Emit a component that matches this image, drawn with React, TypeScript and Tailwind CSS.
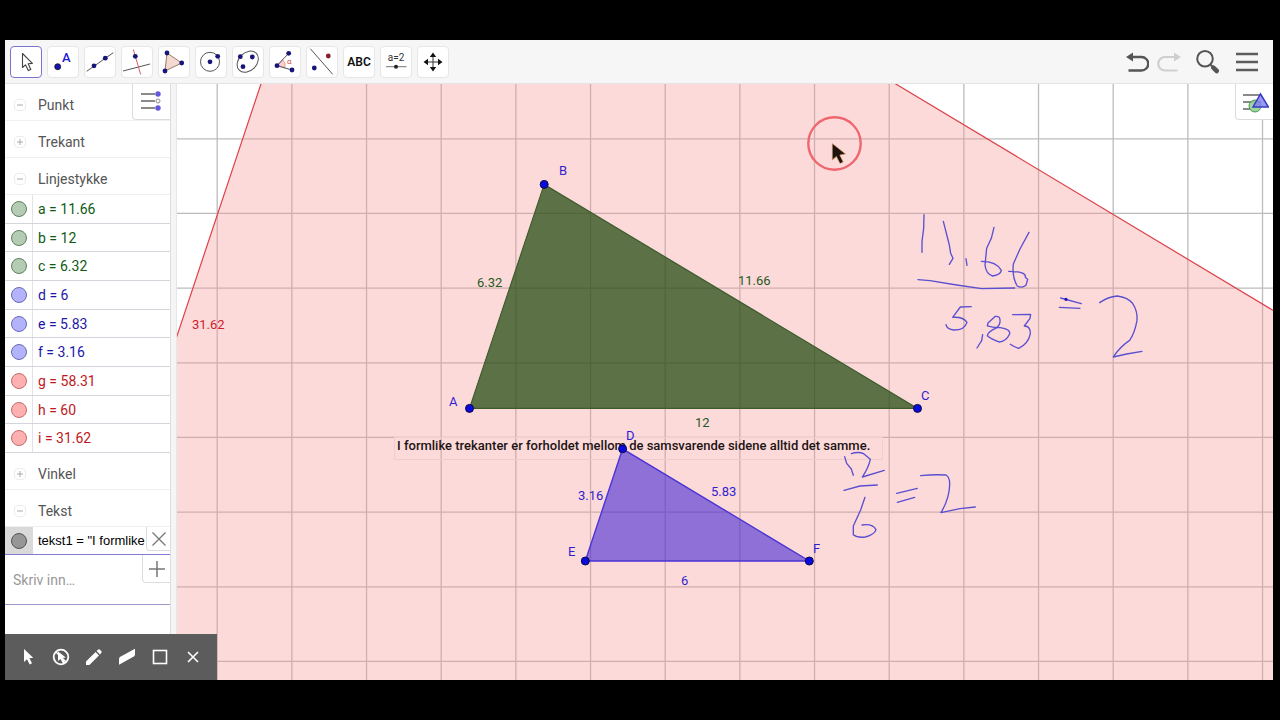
import React from 'react';

const UNIT = 112 / 3;

// The graphics view: where world axes land on the drawing surface
const gridX = Array.from({ length: 40 }, (_, i) => 40.2 + i * UNIT * 2);
const gridY = Array.from({ length: 20 }, (_, i) => 54.8 + i * UNIT * 2);

const segments = [
  { name: 'a', value: '11.66', text: 'text-[#0f5a14]', marble: 'bg-[#b3ccb3] border-[#5f7f5f]' },
  { name: 'b', value: '12', text: 'text-[#0f5a14]', marble: 'bg-[#b3ccb3] border-[#5f7f5f]' },
  { name: 'c', value: '6.32', text: 'text-[#0f5a14]', marble: 'bg-[#b3ccb3] border-[#5f7f5f]' },
  { name: 'd', value: '6', text: 'text-[#1c17a8]', marble: 'bg-[#b3b3fb] border-[#6a6ab8]' },
  { name: 'e', value: '5.83', text: 'text-[#1c17a8]', marble: 'bg-[#b3b3fb] border-[#6a6ab8]' },
  { name: 'f', value: '3.16', text: 'text-[#1c17a8]', marble: 'bg-[#b3b3fb] border-[#6a6ab8]' },
  { name: 'g', value: '58.31', text: 'text-[#c01822]', marble: 'bg-[#ffb0b0] border-[#c26a6a]' },
  { name: 'h', value: '60', text: 'text-[#c01822]', marble: 'bg-[#ffb0b0] border-[#c26a6a]' },
  { name: 'i', value: '31.62', text: 'text-[#c01822]', marble: 'bg-[#ffb0b0] border-[#c26a6a]' },
];

const points = [
  { name: 'A', x: 292.5, y: 324.4, lx: 272, ly: 322 },
  { name: 'B', x: 367.2, y: 100.4, lx: 382, ly: 91 },
  { name: 'C', x: 740.5, y: 324.4, lx: 744, ly: 316 },
  { name: 'D', x: 445.6, y: 364.8, lx: 449, ly: 356 },
  { name: 'E', x: 408.3, y: 477, lx: 391, ly: 472 },
  { name: 'F', x: 632.3, y: 477, lx: 636, ly: 469 },
];

const lengths = [
  { text: '6.32', x: 300, y: 203, fill: '#1f5a1f' },
  { text: '11.66', x: 561, y: 201, fill: '#1f5a1f' },
  { text: '12', x: 518, y: 343, fill: '#1f5a1f' },
  { text: '3.16', x: 401, y: 416, fill: '#2f1fd0' },
  { text: '5.83', x: 534, y: 412, fill: '#2f1fd0' },
  { text: '6', x: 504, y: 501, fill: '#2f1fd0' },
  { text: '31.62', x: 15, y: 245, fill: '#d01c2c' },
];

const Dot = ({ x, y, fill = '#16167a' }: { x: number; y: number; fill?: string }) => (
  <circle cx={x} cy={y} r="2.4" fill={fill} />
);

const tools = [
  {
    label: 'Flytt',
    icon: (
      <path
        d="M12.5 7.5V21.5L15.5 18.8L18.3 24.6L20.8 23.4L18.2 17.8L22.4 17.4Z"
        fill="white"
        stroke="#444"
        strokeWidth="1.1"
        strokeLinejoin="round"
      />
    ),
  },
  {
    label: 'Punkt',
    icon: (
      <>
        <circle cx="10.7" cy="20.7" r="3" fill="#1515b5" stroke="#111" strokeWidth="0.8" />
        <text x="15" y="16" fontSize="13" fontWeight="500" fill="#1b1bd6">A</text>
      </>
    ),
  },
  {
    label: 'Linje',
    icon: (
      <>
        <path d="M2.7 25.3L29.3 6.7" stroke="#555" />
        <Dot x={10} y={19.8} />
        <Dot x={21.3} y={12.2} />
      </>
    ),
  },
  {
    label: 'Normal linje',
    icon: (
      <>
        <path d="M2 25L29 18" stroke="#555" />
        <path d="M12.3 3.5L19.7 28.5" stroke="#d4606e" />
        <Dot x={14.3} y={10.3} />
      </>
    ),
  },
  {
    label: 'Mangekant',
    icon: (
      <>
        <path d="M9 7L23.7 17L7 25Z" fill="#f3d9cf" stroke="#9a7a6c" />
        <Dot x={9} y={7} />
        <Dot x={23.7} y={17} />
        <Dot x={7} y={25} />
      </>
    ),
  },
  {
    label: 'Sirkel',
    icon: (
      <>
        <circle cx="15" cy="15.8" r="9.5" stroke="#555" />
        <Dot x={15} y={15.8} />
        <Dot x={22.7} y={10.3} />
      </>
    ),
  },
  {
    label: 'Ellipse',
    icon: (
      <>
        <ellipse cx="15.7" cy="15.7" rx="12" ry="9" transform="rotate(-45 15.7 15.7)" stroke="#555" />
        <Dot x={8.3} y={10.7} />
        <Dot x={20.3} y={11} />
        <Dot x={11} y={20.7} />
      </>
    ),
  },
  {
    label: 'Vinkel',
    icon: (
      <>
        <path d="M8 19.7L13.5 13.7A8 8 0 0 1 16 21.7Z" fill="#f8d0d0" stroke="#e08080" strokeWidth="0.7" />
        <path d="M19.7 7.3L8 19.7L23 24" stroke="#555" />
        <Dot x={8} y={19.7} />
        <Dot x={19.7} y={7.3} />
        <Dot x={23} y={24} />
        <text x="18" y="18" fontSize="8" fill="#d85050">α</text>
      </>
    ),
  },
  {
    label: 'Speil',
    icon: (
      <>
        <path d="M4.3 2.7L26.7 28.3" stroke="#555" />
        <Dot x={22.3} y={10} fill="#8c1c2c" />
        <Dot x={8.3} y={22} />
      </>
    ),
  },
  {
    label: 'Tekst',
    icon: (
      <text x="16" y="20" fontSize="12" fontWeight="600" textAnchor="middle" fill="#111">ABC</text>
    ),
  },
  {
    label: 'Glider',
    icon: (
      <>
        <text x="16" y="15" fontSize="10" textAnchor="middle" fill="#333">a=2</text>
        <path d="M6 20.7H26.5" stroke="#777" />
        <circle cx="16" cy="20.7" r="2" fill="#222" />
      </>
    ),
  },
  {
    label: 'Flytt grafikkfelt',
    icon: (
      <>
        <path d="M9 16H23M16 9V23" stroke="#333" />
        <path
          d="M16 6.5L19.2 11H12.8ZM16 25.5L19.2 21H12.8ZM6.5 16L11 12.8V19.2ZM25.5 16L21 12.8V19.2Z"
          fill="#111"
        />
      </>
    ),
  },
];

const recorderTools = [
  {
    label: 'Peker',
    icon: <path d="M8 4L8 17L11 14.3L13.7 19.5L16 18.3L13.4 13.2L17.2 12.7Z" fill="white" />,
  },
  {
    label: 'Fokus på musen',
    icon: (
      <>
        <circle cx="12" cy="12" r="7.3" stroke="white" strokeWidth="1.8" />
        <path d="M9 6.5V16L11.4 14L14 18.5L16 17.4L13.6 13L16.8 12.5Z" fill="white" />
        <path d="M7 7L17 17" stroke="white" strokeWidth="1.4" />
      </>
    ),
  },
  {
    label: 'Penn',
    icon: (
      <path
        d="M4 20V16.6L13.6 7L17 10.4L7.4 20ZM14.6 6L16.2 4.5Q17 3.9 17.8 4.6L19.4 6.2Q20 7 19.4 7.8L18 9.4Z"
        fill="white"
      />
    ),
  },
  {
    label: 'Viskelær',
    icon: <path d="M4 14Q4 12.6 5.3 11.8L20 3.8V9.6Q20 10.8 18.8 11.6L4 19.8Z" fill="white" />,
  },
  {
    label: 'Firkant',
    icon: <rect x="5.5" y="5.5" width="13" height="13" stroke="white" strokeWidth="1.6" />,
  },
  {
    label: 'Lukk',
    icon: <path d="M7 7L17 17M17 7L7 17" stroke="white" strokeWidth="1.6" />,
  },
];

function Toolbar() {
  return (
    <header className="flex h-11 shrink-0 items-center justify-between border-b border-[#e4e4e4] bg-[#f6f6f6] pr-3 pl-[5px]">
      <div className="flex gap-[5px]">
        {tools.map((tool, index) => (
          <button
            key={tool.label}
            type="button"
            aria-label={tool.label}
            className={`size-8 rounded border bg-white ${index === 0 ? 'border-[#7b74cc]' : 'border-[#e6e6e6]'}`}
          >
            <svg viewBox="1 1 30 30" className="size-full" fill="none">
              {tool.icon}
            </svg>
          </button>
        ))}
      </div>
      <div className="flex items-center gap-3">
        <div className="flex gap-1">
          <button type="button" aria-label="Angre" className="h-8 w-7">
            <svg viewBox="0 0 28 32" className="size-full" fill="none" stroke="#555" strokeWidth="2.4">
              <path d="M10 11H20.5A6.2 6.2 0 0 1 20.5 24.5H7.5" />
              <path d="M5 11L12 6.5V15.5Z" fill="#555" stroke="none" />
            </svg>
          </button>
          <button type="button" aria-label="Gjør om" className="h-8 w-7">
            <svg viewBox="0 0 28 32" className="size-full" fill="none" stroke="#cfcfcf" strokeWidth="2.2">
              <path d="M22 11H12A6.2 6.2 0 0 0 12 24.5H24.5" />
              <path d="M28 11L21 6.5V15.5Z" fill="#cfcfcf" stroke="none" />
            </svg>
          </button>
        </div>
        <button type="button" aria-label="Søk" className="size-7">
          <svg viewBox="0 0 28 28" className="size-full" fill="none">
            <circle cx="12" cy="10.7" r="7.8" stroke="#555" strokeWidth="2" />
            <path d="M17.5 16.7L20 19" stroke="#555" strokeWidth="2" />
            <path d="M20.3 19.6L23.8 23" stroke="#555" strokeWidth="4.6" strokeLinecap="round" />
          </svg>
        </button>
        <button type="button" aria-label="Meny" className="size-7">
          <svg viewBox="0 0 28 28" className="size-full" stroke="#5c5c5c" strokeWidth="2.6">
            <path d="M3 6H25M3 14H25M3 22H25" />
          </svg>
        </button>
      </div>
    </header>
  );
}

function GroupRow({ title, open }: { title: string; open: boolean }) {
  return (
    <div className="flex h-[37px] items-center gap-3 border-b border-[#efefef] pt-1.5 pl-[9px]">
      <button
        type="button"
        aria-label={title}
        aria-expanded={open}
        className="size-3 rounded-sm border border-[#ececec] text-[#aaa]"
      >
        <svg viewBox="0 0 10 10" className="size-full" stroke="currentColor">
          <path d={open ? 'M2 5H8' : 'M2 5H8M5 2V8'} />
        </svg>
      </button>
      <span className="text-sm text-[#555]">{title}</span>
    </div>
  );
}

function AlgebraView() {
  return (
    <aside className="relative w-[166px] shrink-0 border-r border-[#dedede] bg-white">
      <GroupRow title="Punkt" open />
      <GroupRow title="Trekant" open={false} />
      <GroupRow title="Linjestykke" open />
      <ul className="flex h-[258px] flex-col">
        {segments.map((segment) => (
          <li key={segment.name} className="flex flex-1 border-b border-[#d4d4dc]">
            <span className="flex w-7 items-center justify-center border-r border-[#e2e2e8]">
              <button
                type="button"
                aria-label={`Vis ${segment.name}`}
                className={`size-4 rounded-full border ${segment.marble}`}
              />
            </span>
            <span className={`flex items-center pl-[5px] text-sm ${segment.text}`}>
              {segment.name} = {segment.value}
            </span>
          </li>
        ))}
      </ul>
      <GroupRow title="Vinkel" open={false} />
      <GroupRow title="Tekst" open />
      <div className="relative flex h-7 border-b border-[#7f7ad6]">
        <span className="flex w-7 shrink-0 items-center justify-center bg-[#d9d9d9]">
          <button type="button" aria-label="Vis tekst1" className="size-4 rounded-full border border-[#555] bg-[#969696]" />
        </span>
        <span className="flex items-center overflow-hidden pl-[5px] font-['Liberation_Sans',sans-serif] text-[13px] whitespace-nowrap text-black">
          tekst1 = "I formlike
        </span>
        <button
          type="button"
          aria-label="Slett"
          className="absolute top-0 right-0 flex h-6 w-6 items-center justify-center rounded-bl border-b border-l border-[#dcdcdc] bg-white"
        >
          <svg viewBox="0 0 14 14" className="size-3.5" stroke="#777" strokeWidth="1.3">
            <path d="M0.5 0.5L13.5 13.5M13.5 0.5L0.5 13.5" />
          </svg>
        </button>
      </div>
      <div className="relative h-[50px] border-b border-[#9a98c8]">
        <input
          type="text"
          aria-label="Skriv inn"
          placeholder="Skriv inn…"
          className="size-full pr-8 pl-2 text-sm text-[#333] outline-none placeholder:text-[#999]"
        />
        <button
          type="button"
          aria-label="Legg til"
          className="absolute top-0 right-0 flex h-7 w-7 items-center justify-center rounded-bl border-b border-l border-[#dcdcdc] bg-white"
        >
          <svg viewBox="0 0 16 16" className="size-4" stroke="#777" strokeWidth="1.5">
            <path d="M0 8H16M8 0V16" />
          </svg>
        </button>
      </div>
      <button
        type="button"
        aria-label="Stilfelt"
        className="absolute top-0 right-0 flex h-9 w-[38px] items-center justify-center rounded-bl border-b border-l border-[#dcdcdc] bg-white"
      >
        <svg viewBox="2 1 22 22" className="size-[22px]" fill="none" stroke="#8a8a8a" strokeWidth="2">
          <path d="M2 4H16M2 11H16M2 18H16" />
          <circle cx="19" cy="4" r="2.7" fill="#6458dc" stroke="none" />
          <circle cx="19" cy="11" r="2" fill="white" strokeWidth="1" />
          <circle cx="19" cy="18" r="2.7" fill="#6458dc" stroke="none" />
        </svg>
      </button>
    </aside>
  );
}

function Handwriting() {
  return (
    <g fill="none" stroke="#5a4fd0" strokeWidth="4" strokeLinecap="round" strokeLinejoin="round">
      {/* 11,66 / 5,83 = 2 */}
      <g transform="translate(703 106) scale(0.3333)">
        <path d="M132 74L131 115L126 155V187" />
        <path d="M190 94L208 165L212 190L219 205L208 223" />
        <path d="M258 206L261 226" />
        <path d="M342 112L334 145L320 175L315 225Q318 252 338 258Q362 254 364 241Q350 214 304 214" />
        <path d="M447 127L420 177L400 222Q396 262 412 288Q425 296 438 286L443 268L436 262Q440 244 386 244" />
        <path d="M114 269L150 272L230 285L305 296L404 294" />
        <path d="M274 350L241 351L218 382Q250 380 261 397Q254 420 222 420Q200 418 198 404" />
        <path d="M308 434L305 452L291 474" />
        <path d="M360 390Q360 378 346 379L324 399L322 408Q340 414 361 413Q392 418 389 432Q378 455 357 456Q332 446 322 437Q325 424 350 414Q362 402 360 390" />
        <path d="M398 374L452 373L450 385L433 408Q452 408 451 432Q445 462 416 475Q404 472 391 463" />
        <path d="M542 324L604 341M538 352L600 355" />
        <circle cx="558" cy="328" r="3" stroke="#1f12b0" />
        <path d="M659 338Q684 320 712 318Q742 322 757 339Q774 365 771 392Q764 430 749 451Q720 470 700 501L740 492L786 484" />
      </g>
      {/* 12 / 6 = 2 */}
      <g transform="translate(503 296) scale(0.3333)">
        <path d="M494 230L500 250L514 267L520 286" />
        <path d="M514 221Q535 214 551 221L571 238Q566 262 547 291L613 271" />
        <path d="M492 331L540 318L592 315" />
        <path d="M555 352L542 390L520 438L520 464Q532 474 556 471Q584 464 588 449Q578 430 546 435" />
        <path d="M650 340L712 325M652 367L704 352" />
        <path d="M722 287Q760 283 798 285Q810 292 809 315Q808 356 783 398L840 386L886 381" />
      </g>
    </g>
  );
}

function GraphicsView() {
  return (
    <main className="relative min-w-0 flex-1 bg-white">
      <svg className="absolute inset-0 size-full overflow-hidden" fontSize="13">
        <g stroke="#bcbcbc" strokeWidth="1.3">
          {gridX.map((x) => (
            <line key={x} x1={x} x2={x} y1="0" y2="100%" />
          ))}
          {gridY.map((y) => (
            <line key={y} x1="0" x2="100%" y1={y} y2={y} />
          ))}
        </g>
        <polygon
          points="189.8,-317.5 -183.6,802.5 2056,802.5"
          fill="#fa9494"
          fillOpacity="0.35"
          stroke="#dc4048"
          strokeWidth="1.2"
        />
        <text x="220" y="366" fontWeight="500" fill="#1c1414">
          I formlike trekanter er forholdet mellom de samsvarende sidene alltid det samme.
        </text>
        <rect x="217.5" y="353.5" width="488" height="22" fill="none" stroke="#ecd0d0" />
        <polygon
          points="292.5,324.4 367.2,100.4 740.5,324.4"
          fill="#274d15"
          fillOpacity="0.75"
          stroke="#3c5c2c"
          strokeWidth="1.2"
        />
        <polygon
          points="445.6,364.8 408.3,477 632.3,477"
          fill="#4629d3"
          fillOpacity="0.6"
          stroke="#4a34d4"
          strokeWidth="1.4"
        />
        {lengths.map((label) => (
          <text key={label.text} x={label.x} y={label.y} fill={label.fill}>
            {label.text}
          </text>
        ))}
        {points.map((point) => (
          <g key={point.name}>
            <circle cx={point.x} cy={point.y} r="4" fill="#0a0ae0" stroke="#0a0a40" />
            <text x={point.lx} y={point.ly} fill="#2f1fd0">
              {point.name}
            </text>
          </g>
        ))}
        <Handwriting />
        <circle cx="657.5" cy="59.5" r="26.2" fill="none" stroke="#f0666f" strokeWidth="2.4" />
        <path
          d="M655.3 59.5V76L659.4 72.4L663 79.6L666.2 78L662.8 71L668.5 70Z"
          fill="#1c1410"
          stroke="#e0a060"
          strokeWidth="0.6"
        />
      </svg>
      <button
        type="button"
        aria-label="Stilfelt for grafikkfelt"
        className="absolute top-0 right-0 flex h-9 w-[38px] items-center justify-center rounded-bl border-b border-l border-[#dcdcdc] bg-white"
      >
        <svg viewBox="0 1 28 24" className="h-6 w-7" fill="none">
          <path d="M2 6H20M2 13H20M2 20H10" stroke="#8a8a8a" strokeWidth="2.2" />
          <circle cx="14" cy="17" r="6" fill="#8ccf8c" fillOpacity="0.85" stroke="#4a9a4a" />
          <path d="M19.5 5L27.5 18H12Z" fill="#8080f0" fillOpacity="0.8" stroke="#3a3ac8" strokeWidth="1.5" />
        </svg>
      </button>
    </main>
  );
}

export default function App() {
  return (
    <div className="flex min-h-screen bg-black py-10 pr-[7px] pl-[5px] font-[Roboto,sans-serif]">
      <div className="relative flex min-w-0 flex-1 flex-col bg-[#f4f4f4]">
        <Toolbar />
        <div className="flex flex-1">
          <AlgebraView />
          <div className="w-1.5 shrink-0 border-r border-[#e6e6e6] bg-[#f5f5f5]" />
          <GraphicsView />
        </div>
        <div className="absolute bottom-0 left-0 flex h-[46px] items-center bg-[#5c5c5c] pr-2 pl-1.5">
          {recorderTools.map((tool) => (
            <button
              key={tool.label}
              type="button"
              aria-label={tool.label}
              className="flex h-full w-[33px] items-center justify-center"
            >
              <svg viewBox="0 0 24 24" className="size-6" fill="none">
                {tool.icon}
              </svg>
            </button>
          ))}
        </div>
      </div>
    </div>
  );
}
